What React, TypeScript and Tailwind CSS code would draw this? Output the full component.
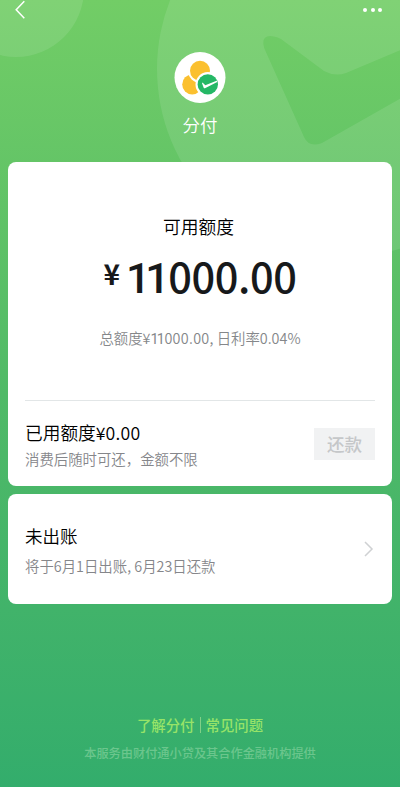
import React from "react";

const cjk = "font-['Noto_Sans_CJK_SC',sans-serif]";

function Backdrop() {
  return (
    <svg className="absolute inset-0 -z-10" width="400" height="260" viewBox="0 0 400 260" aria-hidden="true">
      <mask id="tick">
        <rect width="400" height="260" fill="#fff" />
        <path
          d="M274 36.500Q262 34 263.500 45Q264 48 265 50L304 137Q309 148 322 143L410 93V46L346 73Q335 77 324 71L281 39Q278 37 274 36.500Z"
          fill="#000"
        />
      </mask>
      <circle cx="16" cy="-11" r="68" fill="#fff" fillOpacity="0.1" />
      <circle cx="345" cy="69" r="188" fill="#fff" fillOpacity="0.1" mask="url(#tick)" />
    </svg>
  );
}

function Logo() {
  return (
    <svg width="52" height="52" viewBox="0 0 52 52" role="img" aria-label="分付">
      <circle cx="26" cy="25.500" r="25.500" fill="#fff" />
      <circle cx="18.200" cy="32.400" r="10" fill="#fbc02f" />
      <circle cx="26" cy="18.800" r="12" fill="#fff" />
      <circle cx="26" cy="18.800" r="10" fill="#fbc02f" />
      <circle cx="33.800" cy="32.400" r="12.300" fill="#fff" />
      <circle cx="33.800" cy="32.400" r="10.200" fill="#25b866" />
      <path d="M28.500 30.600L31.300 33.300L43.200 28.600V29.900L31 36.200Q30.100 36.600 29.700 35.700L28 31.200Z" fill="#fff" />
    </svg>
  );
}

export default function App() {
  return (
    <main
      className={`relative isolate flex h-[787px] w-[400px] flex-col overflow-hidden bg-linear-to-b from-[#72cd66] via-[#50ba67] via-50% to-[#33ad6c] ${cjk}`}
    >
      <Backdrop />
      <header className="flex h-5 items-center justify-between pr-[18px] pl-[15px] text-white">
        <svg width="11" height="20" viewBox="0 0 11 20" fill="none" stroke="currentColor" strokeWidth="1.500">
          <path d="M9.300 1.200L1.200 9.700L9.300 18.200" />
        </svg>
        <span className="flex gap-[3.500px]">
          <i className="size-1 rounded-full bg-white" />
          <i className="size-1 rounded-full bg-white" />
          <i className="size-1 rounded-full bg-white" />
        </span>
      </header>

      <section className="flex h-[142px] flex-col items-center pt-8">
        <Logo />
        <h1 className="mt-2 text-[17.500px] leading-[26px] font-[350] text-white">分付</h1>
      </section>

      <section className="mx-2 h-[324px] rounded-lg bg-white px-[17px]">
        <div className="flex h-[239px] flex-col items-center border-b border-[#e2e6e7] pt-[51px]">
          <h2 className="mr-[3px] text-[17.800px] leading-[26px] font-[350] text-black">可用额度</h2>
          <p className="mt-[11px] flex h-[52px] items-center text-[#17191b]">
            <span className="mr-[6px] -mt-[6px] text-[28px] font-bold">¥</span>
            <span className="text-[41.500px] leading-[52px] font-medium">
              <span className="font-['Roboto',sans-serif] text-[43px]">
                <span className="tracking-[-5.300px]">1</span>
                <span className="tracking-[-1.500px]">1</span>
              </span>
              <span className="tracking-[-0.400px]">000.00</span>
            </span>
          </p>
          <p className="mt-[23px] text-[14.400px] leading-[26px] font-[350] whitespace-nowrap text-[#85878a]">
            总额度¥
            <span className="font-['Roboto',sans-serif] font-normal">
              <span className="tracking-[-1.800px]">1</span>
              <span className="tracking-[-0.500px]">1</span>
            </span>
            <span className="tracking-[0.300px]">000.00</span>, 日利率0.04%
          </p>
        </div>
        <div className="flex h-[85px] items-center justify-between">
          <div className="pt-[2px]">
            <h2 className="text-[17.700px] leading-[28px] font-[350] text-black">
              已用额度¥<span className="tracking-[0.300px]">0.00</span>
            </h2>
            <p className="text-[14.400px] leading-[26px] font-[350] text-[#85868a]">消费后随时可还，金额不限</p>
          </div>
          <button className="h-8 w-[61px] bg-[#f1f2f3] text-[17.500px] leading-8 font-medium text-[#c5c7c9]">还款</button>
        </div>
      </section>

      <section className="mx-2 mt-2 flex h-[110px] items-center justify-between rounded-lg bg-white px-[17px]">
        <div className="pt-[3px]">
          <h2 className="text-[17.500px] leading-[30px] font-[350] text-black">未出账</h2>
          <p className="text-[14.400px] leading-[30px] font-[350] text-[#85868a]">将于6月1日出账, 6月23日还款</p>
        </div>
        <svg className="mr-[1px]" width="10" height="16" viewBox="0 0 10 16" fill="none" stroke="#cfd1d3" strokeWidth="1.500">
          <path d="M1 1L8 8L1 15" />
        </svg>
      </section>

      <footer className="flex flex-col items-center pt-[108px]">
        <nav className="flex h-[26px] items-center text-[14.400px] font-medium text-[#96e368]">
          <a>了解分付</a>
          <i className="mx-[5px] h-4 w-px bg-[#81cf87]" />
          <a>常见问题</a>
        </nav>
        <p className="mt-[3px] text-[12.200px] leading-6 font-medium text-[#6bc68d]">本服务由财付通小贷及其合作金融机构提供</p>
      </footer>
    </main>
  );
}
